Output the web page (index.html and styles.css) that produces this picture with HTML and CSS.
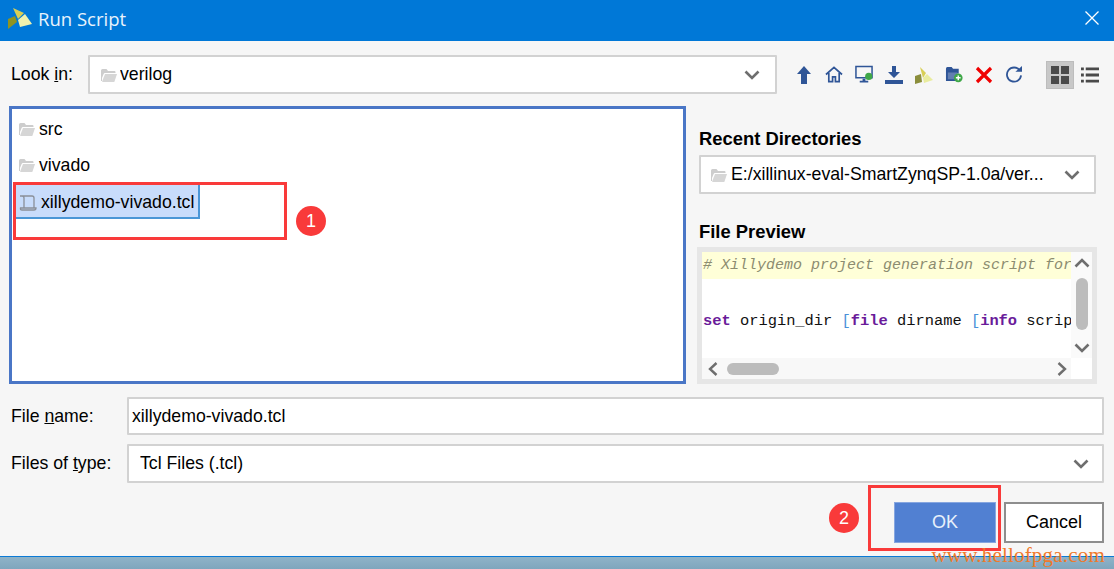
FILE: index.html
```html
<!DOCTYPE html>
<html lang="en">
<head>
<meta charset="utf-8">
<title>Run Script</title>
<link rel="stylesheet" href="styles.css">
</head>
<body>
<svg class="defs" width="0" height="0" aria-hidden="true">
  <symbol id="folder" viewBox="0 0 16 14">
    <path d="M0 2.500Q0 1 1.500 1H5.500L7 3H13.500Q14.500 3 14.500 4V5H4Q3 5 2.600 6L1 10V13H0Z" fill="#cdcdcd"/>
    <path d="M4 6H16L13.500 13.500Q13.300 14 12.500 14H1.500Q1 14 1.300 13Z" fill="#d6d6d6"/>
  </symbol>
  <symbol id="chev" viewBox="0 0 16 10">
    <path d="M1.500 1.500L8 8L14.500 1.500" fill="none" stroke="#6e6e6e" stroke-width="2.600"/>
  </symbol>
  <symbol id="xlogo" viewBox="0 0 24 22">
    <path d="M5 1L16 6L10 12Z" fill="#d8cf55"/>
    <path d="M10 13L17 7L24 17L12 20Z" fill="#f0f2ae"/>
    <path d="M0 12L7 9L9 15L0 22Z" fill="#8f9422"/>
  </symbol>
  <symbol id="xlogo-small" viewBox="0 0 18 18">
    <path d="M5 1L11 7L8 12Z" fill="#d8cf55"/>
    <path d="M8 12L12 8L18 14L9 17Z" fill="#e9ec9e"/>
    <path d="M0 10L6 8L7 16L0 18Z" fill="#8b8e3c"/>
  </symbol>
</svg>
<div class="dialog">
  <header class="titlebar">
    <svg class="title-logo" width="24" height="22"><use href="#xlogo"/></svg>
    <span class="title-text">Run Script</span>
    <svg class="close" width="16" height="16" viewBox="0 0 16 16"><path d="M1.500 1.500L14.500 14.500M14.500 1.500L1.500 14.500" stroke="#fff" stroke-width="1.300" fill="none"/></svg>
  </header>

  <div class="lookin-row">
    <label class="lookin-label">Look <u>i</u>n:</label>
    <div class="field lookin-field">
      <svg class="folder" width="16" height="14"><use href="#folder"/></svg>
      <span class="grow">verilog</span>
      <svg class="chev" width="16" height="10"><use href="#chev"/></svg>
    </div>
    <div class="tools">
      <svg width="18" height="20" viewBox="0 0 18 20"><path d="M9 1L16 9H12V19H6V9H2Z" fill="#2f5597"/></svg>
      <svg width="18" height="17" viewBox="0 0 19 18"><path d="M1 9L9.500 1.500L18 9M4 7.500V16.500H8V11.500H11V16.500H15V7.500" fill="none" stroke="#2f5597" stroke-width="1.800"/></svg>
      <svg width="18" height="19" viewBox="0 0 19 19"><path d="M1 1H18V13H1Z" fill="none" stroke="#2f5597" stroke-width="1.600"/><path d="M8 14H11V16H14V18H5V16H8Z" fill="#2f5597"/><circle cx="14.500" cy="11.500" r="3.800" fill="#3fa748"/></svg>
      <svg width="18" height="18" viewBox="0 0 18 18"><path d="M7 0H11V6H15L9 12L3 6H7ZM0 14H18V18H0Z" fill="#2f5597"/></svg>
      <svg width="18" height="18"><use href="#xlogo-small"/></svg>
      <svg width="18" height="17" viewBox="0 0 19 18"><path d="M1 3Q1 1 2.500 1H7L8.500 3H14.500V8H13L11 16H1Z" fill="#2f5597"/><path d="M3 7H13L11.500 14H3Z" fill="#fff" opacity=".25"/><circle cx="14" cy="12.500" r="4.600" fill="#3fa748"/><path d="M14 10V15M11.500 12.500H16.500" stroke="#fff" stroke-width="1.500"/></svg>
      <svg width="18" height="18" viewBox="0 0 18 18"><path d="M2 2L16 16M16 2L2 16" stroke="#f00000" stroke-width="3.200" fill="none"/></svg>
      <svg width="18" height="17" viewBox="0 0 19 18"><path d="M15.500 4.500A7.500 7.500 0 1 0 17 10" fill="none" stroke="#2f5597" stroke-width="1.900"/><path d="M11 6H18V0Z" fill="#2f5597"/></svg>
    </div>
    <div class="views">
      <span class="view-active">
        <svg width="18" height="18" viewBox="0 0 18 18"><path d="M0 0H8V8H0ZM10 0H18V8H10ZM0 10H8V18H0ZM10 10H18V18H10Z" fill="#4a4a4a"/></svg>
      </span>
      <svg width="18" height="18" viewBox="0 0 19 18"><path d="M0 1H3V4H0ZM5 1H19V4H5ZM0 7.500H3V10.500H0ZM5 7.500H19V10.500H5ZM0 14H3V17H0ZM5 14H19V17H5Z" fill="#4a4a4a"/></svg>
    </div>
  </div>

  <div class="main-row">
    <div class="file-list">
      <div class="file-row"><svg class="folder" width="16" height="14"><use href="#folder"/></svg><span>src</span></div>
      <div class="file-row"><svg class="folder" width="16" height="14"><use href="#folder"/></svg><span>vivado</span></div>
      <div class="file-row selected">
        <svg class="script-icon" width="18" height="16" viewBox="0 0 18 16"><path d="M1 1H13Q15 1 15 3V13M3 1Q5 1 5 3V13M5 13H17Q17 15 15 15H3Q1 15 1.500 13Z" fill="none" stroke="#8a8f98" stroke-width="1.300"/></svg>
        <span>xillydemo-vivado.tcl</span>
      </div>
    </div>
    <aside class="side">
      <h2 class="side-title">Recent Directories</h2>
      <div class="field recent-field">
        <svg class="folder" width="16" height="14"><use href="#folder"/></svg>
        <span class="grow">E:/xillinux-eval-SmartZynqSP-1.0a/ver...</span>
        <svg class="chev" width="16" height="10"><use href="#chev"/></svg>
      </div>
      <h2 class="side-title preview-title">File Preview</h2>
      <div class="preview">
        <div class="preview-body">
          <div class="code">
            <div class="code-line comment"># Xillydemo project generation script for</div>
            <div class="code-line plain"><b>set</b> origin_dir <i>[</i><b>file</b> dirname <i>[</i><b>info</b> scrip</div>
          </div>
          <div class="vbar">
            <svg width="16" height="10" viewBox="0 0 16 10"><path d="M1.500 8.500L8 2L14.500 8.500" fill="none" stroke="#6e6e6e" stroke-width="2.600"/></svg>
            <span class="vthumb"></span>
            <svg width="16" height="10"><use href="#chev"/></svg>
          </div>
        </div>
        <div class="hbar">
          <div class="hbar-track">
            <svg width="10" height="14" viewBox="0 0 10 14"><path d="M8.500 1L2 7L8.500 13" fill="none" stroke="#6e6e6e" stroke-width="2.400"/></svg>
            <span class="hthumb"></span>
            <svg width="10" height="14" viewBox="0 0 10 14"><path d="M1.500 1L8 7L1.500 13" fill="none" stroke="#6e6e6e" stroke-width="2.400"/></svg>
          </div>
          <span class="corner"></span>
        </div>
      </div>
    </aside>
  </div>

  <div class="form-row">
    <label class="form-label">File <u>n</u>ame:</label>
    <div class="field name-field">xillydemo-vivado.tcl</div>
  </div>
  <div class="form-row type-row">
    <label class="form-label">Files of <u>t</u>ype:</label>
    <div class="field type-field"><span class="grow">Tcl Files (.tcl)</span><svg class="chev" width="16" height="10"><use href="#chev"/></svg></div>
  </div>

  <div class="button-row">
    <button class="btn btn-ok">OK</button>
    <button class="btn btn-cancel">Cancel</button>
  </div>
</div>
<div class="desktop"></div>

<div class="mark mark-file"></div>
<div class="badge badge-one">1</div>
<div class="mark mark-ok"></div>
<div class="badge badge-two">2</div>
<div class="watermark">www.hellofpga.com</div>
</body>
</html>
```
FILE: styles.css
```css
* { box-sizing: border-box; }
html, body { margin: 0; padding: 0; }
body {
  width: 1114px;
  height: 569px;
  overflow: hidden;
  position: relative;
  font-family: "Liberation Sans", Arial, sans-serif;
  font-size: 17.7px;
  color: #000;
  background: #7fa9c0;
}
.defs { position: absolute; }
svg { display: block; flex: none; }
.grow { flex: 1; white-space: nowrap; overflow: hidden; }

.dialog {
  height: 557px;
  background: #f6f6f6;
  border-bottom: 1px solid #0b7ad6;
  display: flex;
  flex-direction: column;
}
.desktop { height: 12px; background: linear-gradient(#8fb3c8, #7fa6bd); }

.titlebar {
  height: 41px;
  flex: none;
  background: #0078d7;
  color: #fff;
  display: flex;
  align-items: center;
  padding: 0 14px 5px 8px;
}
.title-logo { margin-right: 6px; }
.title-text { flex: 1; font-family: "Open Sans", "Noto Sans", sans-serif; font-size: 18.5px; color: #e8f3fc; }

.field {
  background: #fff;
  border: 2px solid #d2d2d2;
  border-radius: 1px;
  display: flex;
  align-items: center;
}

.lookin-row {
  display: flex;
  align-items: center;
  height: 39px;
  margin-top: 14px;
  padding-left: 11px;
  flex: none;
}
.lookin-label { width: 77px; }
.lookin-field { width: 689px; height: 39px; padding: 0 15px 0 11px; }
.folder { margin-right: 4px; }
.lookin-field .folder { margin-right: 3px; }
.tools { display: flex; align-items: center; gap: 12px; margin-left: 18px; width: 240px; }
.views { display: flex; align-items: center; gap: 7px; margin-left: 11px; }
.view-active {
  width: 28px;
  height: 28px;
  background: #c8c8c8;
  border: 1px solid #bdbdbd;
  display: flex;
  align-items: center;
  justify-content: center;
}

.main-row { display: flex; margin-top: 12px; padding-left: 9px; height: 278px; flex: none; }
.file-list {
  width: 677px;
  height: 278px;
  background: #fff;
  border: 3px solid #4a76c6;
  padding: 2px 3px;
}
.file-row {
  height: 36px;
  display: flex;
  align-items: center;
  padding-left: 4px;
}
.file-row.selected {
  width: 185px;
  height: 34px;
  margin-top: 2px;
  padding: 3px 0 0 4px;
  background: #c8dcfb;
  border-right: 2px solid #4a96d6;
  border-bottom: 2px solid #4a96d6;
}
.script-icon { margin-right: 4px; }

.side { width: 397px; margin-left: 13px; }
.side-title { margin: 23px 0 0; font-size: 18.4px; font-weight: bold; line-height: 20px; height: 20px; }
.recent-field { height: 39px; margin-top: 6px; padding: 0 14px 0 10px; }
.preview-title { margin-top: 28px; }
.preview {
  height: 137px;
  width: 400px;
  margin-top: 5px;
  margin-left: -2px;
  border: 5px solid #e6e6e6;
  background: #fff;
  display: flex;
  flex-direction: column;
}
.preview-body { flex: 1; display: flex; min-height: 0; }
.code { width: 369px; overflow: hidden; font-family: "Liberation Mono", monospace; font-size: 15.4px; }
.code-line { padding-left: 1px; white-space: pre; height: 27px; }
.comment { background: #ffffd8; color: #8c8c70; font-style: italic; font-size: 15px; line-height: 28px; }
.plain { margin-top: 27px; color: #111; line-height: 30px; }
.plain b { color: #6a1b9a; }
.plain i { font-style: normal; color: #4a90d9; }
.vbar { flex: 1; display: flex; flex-direction: column; align-items: center; padding: 6px 0 5px; justify-content: space-between; background: #fafafa; }
.vthumb { width: 12px; height: 52px; background: #bcbcbc; border-radius: 6px; margin-bottom: 4px; }
.hbar { height: 21px; display: flex; flex: none; }
.hbar-track { width: 369px; background: #f8f8f8; display: flex; align-items: center; padding: 0 4px 0 6px; }
.hthumb { width: 52px; height: 12px; background: #bcbcbc; border-radius: 6px; margin-left: 9px; margin-right: auto; }
.corner { flex: 1; background: #fff; }

.form-row { display: flex; align-items: center; margin-top: 13px; padding-left: 11px; flex: none; }
.type-row { margin-top: 9px; }
.form-label { width: 116px; }
.name-field { width: 977px; height: 38px; padding-left: 3px; }
.type-field { width: 977px; height: 39px; padding: 0 13px 0 11px; }

.button-row { display: flex; justify-content: flex-end; gap: 8px; margin-top: 19px; padding-right: 10px; flex: none; }
.btn { font: inherit; font-size: 18px; height: 41px; border-radius: 0; cursor: default; }
.btn-ok { width: 102px; background: #5180d2; border: 1px solid #86a6e0; color: #e8f0fb; }
.btn-cancel { width: 100px; background: #fff; border: 2px solid #8e8e8e; color: #000; }

.mark { position: absolute; border: 3px solid #f93a3a; pointer-events: none; }
.mark-file { left: 13px; top: 182px; width: 274px; height: 58px; }
.mark-ok { left: 868px; top: 485px; width: 133px; height: 66px; }
.badge {
  position: absolute;
  width: 30px;
  height: 30px;
  border-radius: 50%;
  background: #f93a3a;
  color: #fff;
  display: flex;
  align-items: center;
  justify-content: center;
  font-size: 18px;
}
.badge-one { left: 296px; top: 206px; }
.badge-two { left: 829px; top: 503px; }
.watermark {
  position: absolute;
  right: 9px;
  top: 543px;
  font-family: "Liberation Serif", serif;
  font-size: 21px;
  letter-spacing: 0.2px;
  color: #f0792a;
  white-space: nowrap;
}
```
